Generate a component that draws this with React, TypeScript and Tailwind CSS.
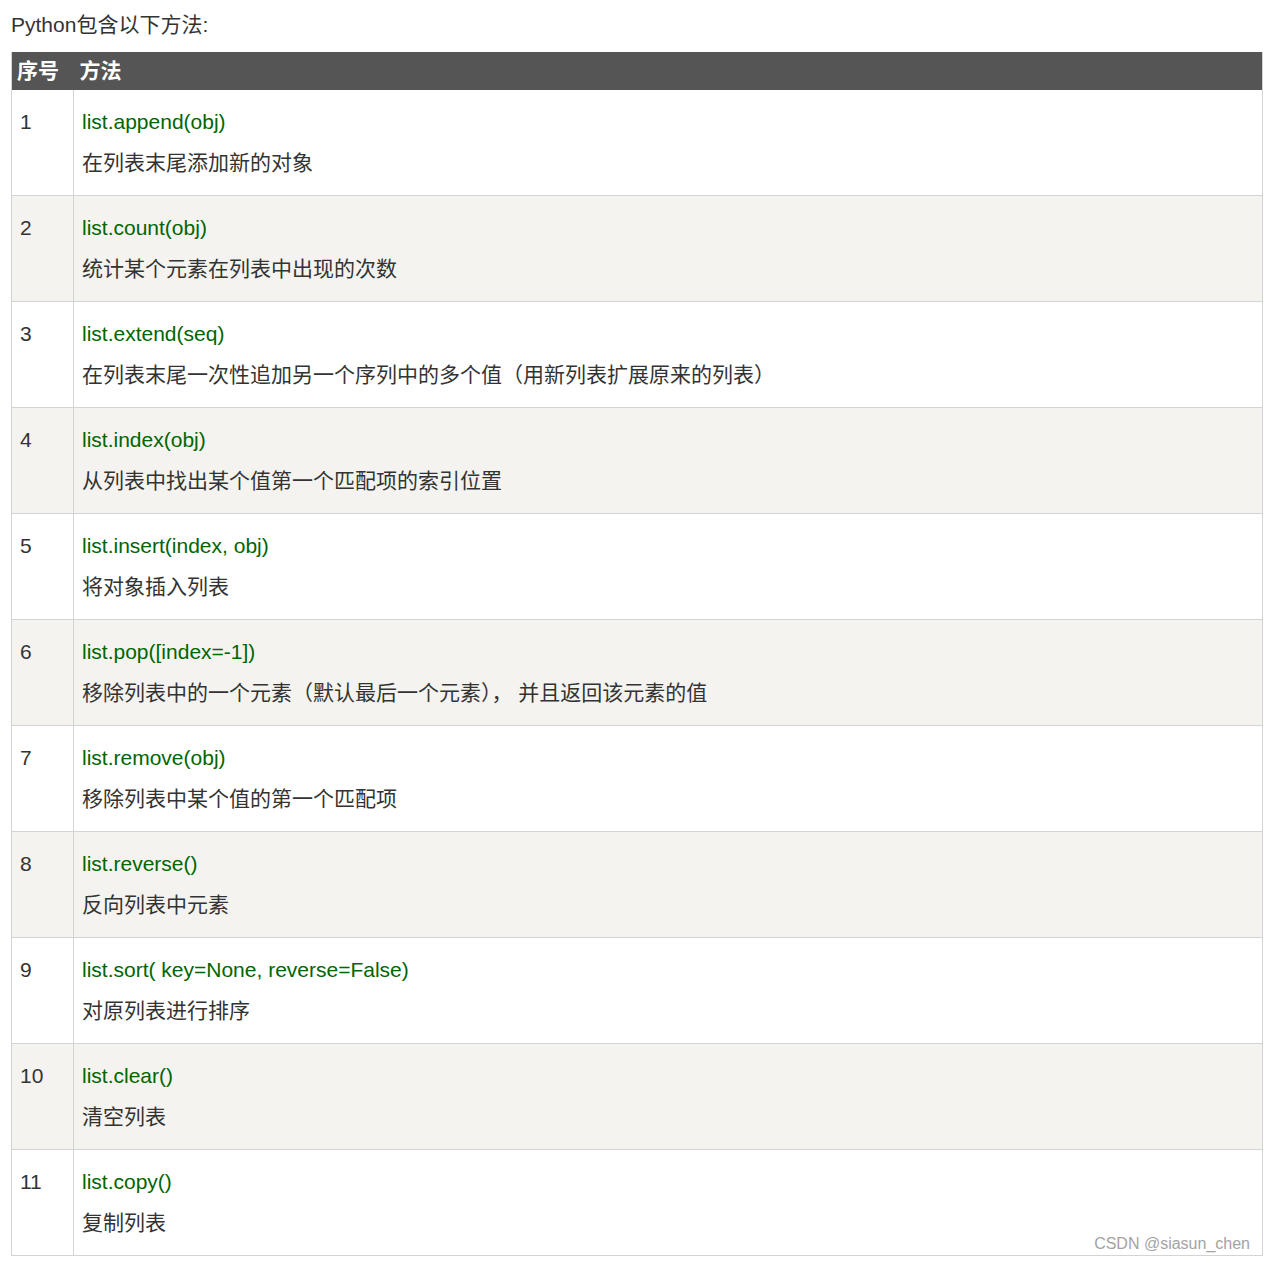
// Python list methods table

const methods: { fn: string; desc: string }[] = [
  { fn: 'list.append(obj)', desc: '在列表末尾添加新的对象' },
  { fn: 'list.count(obj)', desc: '统计某个元素在列表中出现的次数' },
  { fn: 'list.extend(seq)', desc: '在列表末尾一次性追加另一个序列中的多个值（用新列表扩展原来的列表）' },
  { fn: 'list.index(obj)', desc: '从列表中找出某个值第一个匹配项的索引位置' },
  { fn: 'list.insert(index, obj)', desc: '将对象插入列表' },
  { fn: 'list.pop([index=-1])', desc: '移除列表中的一个元素（默认最后一个元素）， 并且返回该元素的值' },
  { fn: 'list.remove(obj)', desc: '移除列表中某个值的第一个匹配项' },
  { fn: 'list.reverse()', desc: '反向列表中元素' },
  { fn: 'list.sort( key=None, reverse=False)', desc: '对原列表进行排序' },
  { fn: 'list.clear()', desc: '清空列表' },
  { fn: 'list.copy()', desc: '复制列表' },
];

const font = "font-['Liberation_Sans','Noto_Sans_CJK_SC',sans-serif]";

export default function App() {
  return (
    <div className={`w-[1264px] bg-white text-[#333333] ${font}`}>
      <p className="pl-[11px] pt-[10px] text-[21px] leading-[30px]">Python包含以下方法:</p>

      <div className="relative ml-[11px] mt-[12px] w-[1252px]">
        <table className="w-full border-collapse border-x border-b border-[#d4d4d4]">
          <thead>
            <tr className="h-[38px] bg-[#555555] text-left text-white">
              <th className="w-[62px] pl-[5px] text-[21px] font-bold leading-[38px]">序号</th>
              <th className="pl-[6px] text-[21px] font-bold leading-[38px]">方法</th>
            </tr>
          </thead>
          <tbody>
            {methods.map((m, i) => (
              <tr
                key={m.fn}
                className={`${i > 0 ? 'border-t border-[#d4d4d4]' : ''} ${i % 2 === 1 ? 'bg-[#f4f3f0]' : 'bg-white'}`}
              >
                <td className="h-[105px] border-r border-[#d4d4d4] pl-[8px] pt-[17px] align-top text-[21px] leading-[30px]">
                  {i + 1}
                </td>
                <td className="pl-[8px] pt-[17px] pb-[17px] align-top text-[21px] leading-[30px]">
                  <div className="text-[#006600]">{m.fn}</div>
                  <div className="mt-[11px]">{m.desc}</div>
                </td>
              </tr>
            ))}
          </tbody>
        </table>
        <span className="absolute bottom-[2px] right-[13px] text-[16px] leading-[20px] text-[#a3a3a3]">
          CSDN @siasun_chen
        </span>
      </div>
    </div>
  );
}
